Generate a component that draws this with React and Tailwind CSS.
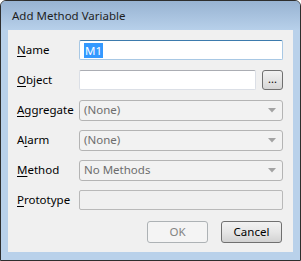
import React from 'react';

const font = { fontFamily: '"Noto Sans", "Open Sans", sans-serif' };

const Label = ({ pre = '', u, post }) => (
  <div className="w-[62px] text-[11.5px] text-black leading-[20px]">
    {pre}
    <span className="underline underline-offset-2">{u}</span>
    {post}
  </div>
);

const Arrow = () => (
  <svg width="8" height="5" viewBox="0 0 8 5" className="shrink-0">
    <path d="M0 0h8L4 4.5z" fill="#a3a3a3" />
  </svg>
);

const Combo = ({ value }) => (
  <div className="flex-1 h-[21px] flex items-center justify-between pl-[4px] pr-[6px] bg-[#f2f2f2] border border-[#b4b4b4] rounded-[3px] text-[11.5px] text-[#6d6d6d]">
    <span>{value}</span>
    <Arrow />
  </div>
);

const Row = ({ label, children }) => (
  <div className="flex items-center h-[20px]">
    {label}
    <div className="flex-1 flex items-center gap-[6px]">{children}</div>
  </div>
);

export default function App() {
  return (
    <div
      className="w-[301px] h-[261px] flex flex-col bg-[#b9d1ea] border border-[#2e2e2e] rounded-t-[6px] overflow-hidden"
      style={font}
    >
      <div className="h-[29px] shrink-0 flex items-center pl-[11px] bg-gradient-to-b from-[#98b3d2] to-[#b7d0ea] text-[11.5px] text-[#1e1e1e]">
        Add Method Variable
      </div>
      <div className="flex-1 px-[7px] pb-[8px] flex">
        <div className="flex-1 bg-[#f0f0f0] pl-[9px] pr-[10px] pt-[10px] flex flex-col">
          <div className="flex flex-col gap-[10px]">
            <Row label={<Label u="N" post="ame" />}>
              <div className="flex-1 h-[20px] flex items-center pl-[4px] bg-white border border-[#a8c8e4] border-t-[#3d7bad] rounded-[2px] text-[11.5px]">
                <span className="bg-[#3399ff] text-white leading-[15px] px-[1px]">M1</span>
              </div>
            </Row>
            <Row label={<Label u="O" post="bject" />}>
              <div className="flex-1 h-[20px] bg-white border border-[#dbdfe6] border-t-[#abadb3] rounded-[2px]" />
              <div className="w-[21px] h-[20px] flex items-end justify-center border border-[#707070] rounded-[3px] bg-gradient-to-b from-[#f2f2f2] to-[#d6d6d6] text-[11px] leading-none text-black pb-[5px]">
                ...
              </div>
            </Row>
            <Row label={<Label u="A" post="ggregate" />}>
              <Combo value="(None)" />
            </Row>
            <Row label={<Label pre="A" u="l" post="arm" />}>
              <Combo value="(None)" />
            </Row>
            <Row label={<Label u="M" post="ethod" />}>
              <Combo value="No Methods" />
            </Row>
            <Row label={<Label u="P" post="rototype" />}>
              <div className="flex-1 h-[20px] bg-[#f0f0f0] border border-[#b9b9b9] rounded-[2px]" />
            </Row>
          </div>
          <div className="flex justify-end gap-[13px] mt-[11px] pr-[1px]">
            <div className="w-[61px] h-[22px] flex items-center justify-center border border-[#adb2b5] rounded-[3px] bg-[#f4f4f4] text-[11.5px] text-[#838383]">
              OK
            </div>
            <div className="w-[61px] h-[22px] flex items-center justify-center border border-[#707070] rounded-[3px] bg-gradient-to-b from-[#f2f2f2] via-[#e6e6e6] to-[#d2d2d2] text-[11.5px] text-black">
              Cancel
            </div>
          </div>
        </div>
      </div>
    </div>
  );
}
